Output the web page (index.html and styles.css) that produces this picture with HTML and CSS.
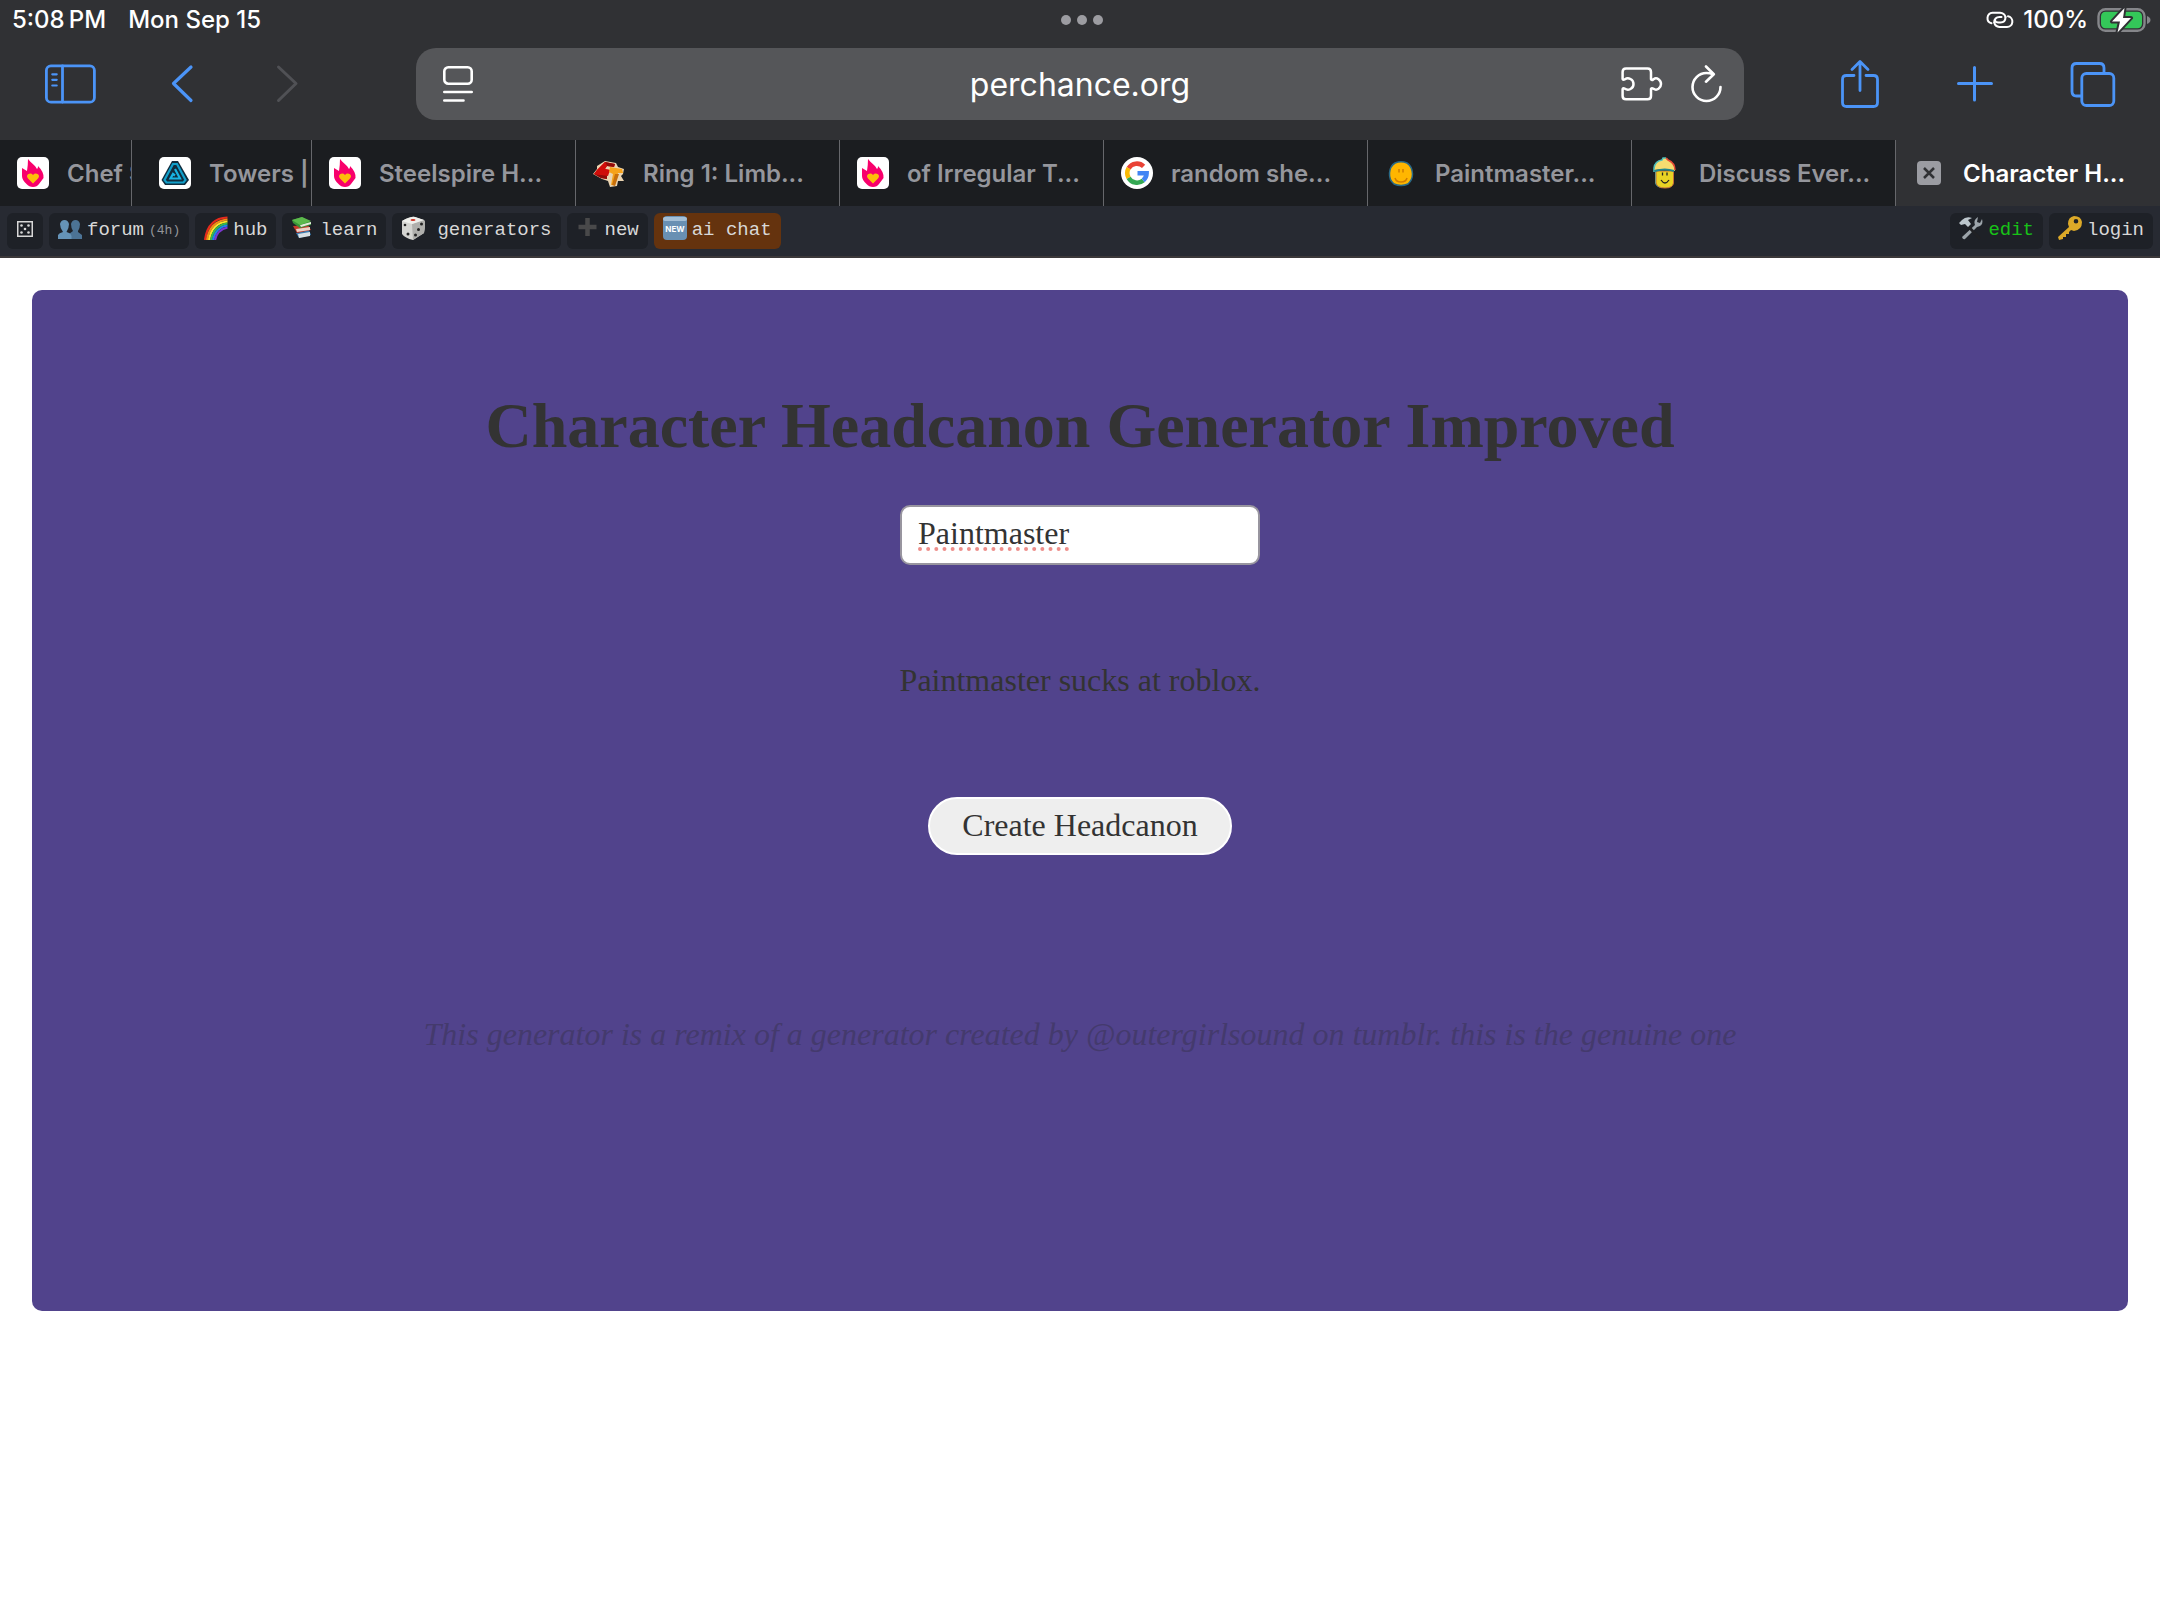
FILE: index.html
```
<!DOCTYPE html>
<html lang="en">
<head>
<meta charset="utf-8">
<meta name="viewport" content="width=device-width, initial-scale=1">
<title>Character Headcanon Generator Improved</title>
<link rel="stylesheet" href="styles.css">
</head>
<body>
<svg class="defs" aria-hidden="true">
  <symbol id="flame" viewBox="0 0 32 32">
    <rect width="32" height="32" rx="5" fill="#fff"/>
    <path d="M11 2C14 6 18 8 20 12C21 11 21 10 21 9C25 13 27 17 26.500 21L22 27Q20 30 16 30Q12 30 9.500 27Q5 23 5 19V11L10 14Q11 8 11 2Z" fill="#f8006b"/>
    <path d="M16 26.500L11 21.500Q9 19 11 17.200Q14 15.500 16 18Q18 15.500 21 17.200Q23 19 21 21.500Z" fill="#fdbd0b"/>
  </symbol>
</svg>

<header class="browser">
  <div class="status">
    <div class="status-left"><span>5:08&#8201;PM</span><span>Mon Sep 15</span></div>
    <div class="dots"><i></i><i></i><i></i></div>
    <div class="status-right">
      <svg width="28" height="18" viewBox="0 0 28 18" fill="none" stroke="#fff" stroke-width="2" stroke-linecap="round"><path d="M5.500 12.300A5.400 5.400 0 0 1 6.500 1.700H14Q18.500 2 19.500 6"/><path d="M19.500 6Q19.500 11.500 14.500 11.500H12.500Q9.500 11.500 9 9.500"/><path d="M22 5.300A5.400 5.400 0 0 1 21 16H13.500Q9 15.500 8.300 11.500"/><path d="M8.300 11.500Q8.300 6 13.500 6H15.500"/></svg>
      <span>100%</span>
      <svg width="54" height="26" viewBox="0 0 54 26"><rect x="1.500" y="2.200" width="46" height="21.600" rx="7" fill="none" stroke="#85868a" stroke-width="2.400"/><path d="M50 9Q53.500 10.500 53.500 13T50 17Z" fill="#85868a"/><rect x="4" y="4.700" width="41" height="16.600" rx="4.500" fill="#34c759"/><path d="M27.500 1L15 14.500H23L20.500 25.500L34 11H26Z" fill="#fff" stroke="#303134" stroke-width="4" stroke-linejoin="round"/><path d="M27.500 1L15 14.500H23L20.500 25.500L34 11H26Z" fill="#fff"/></svg>
    </div>
  </div>

  <div class="toolbar">
    <nav class="tools tools-left" aria-label="Navigation">
      <button class="tool" aria-label="Sidebar"><svg width="52" height="40" viewBox="0 0 52 40" fill="none" stroke="#4b94f7" stroke-width="2.800" stroke-linecap="round"><rect x="2.400" y="1.800" width="48" height="36.400" rx="4.500"/><path d="M18.500 2V38"/><path d="M8.300 10.300H12.700M8.300 15.800H12.700M8.300 21.500H12.700" stroke-width="2.200"/></svg></button>
      <button class="tool" aria-label="Back"><svg width="36" height="40" viewBox="0 0 36 40" fill="none" stroke="#4b94f7" stroke-width="3.200" stroke-linecap="round" stroke-linejoin="round"><path d="M27 3L9.500 19.500L27 36.500"/></svg></button>
      <button class="tool" aria-label="Forward" disabled><svg width="36" height="40" viewBox="0 0 36 40" fill="none" stroke="#505155" stroke-width="3" stroke-linecap="round" stroke-linejoin="round"><path d="M10.500 3L28 19.500L10.500 36.500"/></svg></button>
    </nav>
    <div class="address">
      <button class="tool" aria-label="Page settings"><svg width="32" height="38" viewBox="0 0 32 38" fill="none" stroke="#fff" stroke-width="2.600" stroke-linecap="round"><rect x="2.300" y="2.300" width="27.400" height="16.400" rx="4"/><path d="M2.300 27H29.700M2.300 35.500H21.500"/></svg></button>
      <input class="url" type="text" value="perchance.org" aria-label="Address">
      <div class="address-end">
        <button class="tool" aria-label="Extensions"><svg width="42" height="38" viewBox="0 0 42 38" fill="none" stroke="#fff" stroke-width="2.500" stroke-linejoin="round"><path d="M5 3.500H26.500Q30 3.500 30 7V14.200Q30.500 16 32.500 14.200Q35 12.500 37.500 14.200Q40 16 40 19T37.500 23.800Q35 25.500 32.500 23.800Q30.500 22.500 30 24V31Q30 34.300 26.500 34.300H5Q1.600 34.300 1.600 31V24Q2 22.500 4 23.800Q6.500 25.500 9.500 24Q12.500 22.500 12.500 19T9.500 14Q6.500 12.500 4 14.200Q2 15.500 1.600 14V7Q1.600 3.500 5 3.500Z"/></svg></button>
        <button class="tool" aria-label="Reload"><svg width="32" height="38" viewBox="0 0 32 38" fill="none" stroke="#fff" stroke-width="2.600" stroke-linecap="round" stroke-linejoin="round"><path d="M22.500 9.200Q20 8 16.500 8A14 14 0 1 0 30.500 22"/><path d="M16 1.500L23.800 9.200L16 16.700"/></svg></button>
      </div>
    </div>
    <nav class="tools tools-right" aria-label="Page actions">
      <button class="tool" aria-label="Share"><svg width="48" height="50" viewBox="0 0 48 50" fill="none" stroke="#4b94f7" stroke-width="2.800" stroke-linecap="round" stroke-linejoin="round"><path d="M18 16.500H10.500Q6.500 16.500 6.500 20.500V43.500Q6.500 47.500 10.500 47.500H37.500Q41.500 47.500 41.500 43.500V20.500Q41.500 16.500 37.500 16.500H30"/><path d="M24 31.500V3M16 10.500L24 2.500L32 10.500"/></svg></button>
      <button class="tool" aria-label="New tab"><svg width="48" height="48" viewBox="0 0 48 48" fill="none" stroke="#4b94f7" stroke-width="3" stroke-linecap="round"><path d="M22.500 7.500V40M6.500 23.500H39.500"/></svg></button>
      <button class="tool" aria-label="All tabs"><svg width="48" height="48" viewBox="0 0 48 48" fill="none" stroke="#4b94f7" stroke-width="2.800"><path d="M36 12V8Q36 3.500 31.500 3.500H8.500Q4 3.500 4 8V31.500Q4 36 8.500 36H13"/><rect x="13.800" y="13.500" width="32" height="32" rx="4.500"/></svg></button>
    </nav>
  </div>

  <nav class="tabs" aria-label="Tabs">
    <a class="tab" href="#"><svg class="favicon"><use href="#flame"/></svg><span>Chef S</span></a>
    <a class="tab tab-second" href="#"><svg class="favicon" viewBox="0 0 32 32"><rect width="32" height="32" rx="5" fill="#fff"/><path d="M13 4H19L30 23L26 28H6L2.500 23Z" fill="#102c3d"/><path d="M14 7H18L26.500 23L24.500 25.500H7.500L5.500 23Z" fill="none" stroke="#119fca" stroke-width="2.200"/><path d="M16 12L21 21.500H11.500L14 17L16 18.500" fill="none" stroke="#18b4e4" stroke-width="2.200"/></svg><span>Towers |</span></a>
    <a class="tab" href="#"><svg class="favicon"><use href="#flame"/></svg><span>Steelspire H...</span></a>
    <a class="tab" href="#"><svg class="favicon" viewBox="0 0 32 32"><path d="M4 9L12 4L23 6L25 10L31 12L30 17L28 19L31 24L25 24L24 29L17 30L15 24L9 22L0 17L4 12Z" fill="#ead4b1"/><path d="M4 13L12 5L22 7L21 10L14 9L12 12L17 13L16 16L10 15L9 17L14 18L14 22L8 21L1 17Z" fill="#d90e0a"/><path d="M12 5L22 7L21 10L14 9ZM1 17L8 21L14 22V18L8 18Z" fill="#8f0b08"/><path d="M4 13L12 5L14 9L12 12L17 13L15 19L8 18L1 17Z" fill="#cf0d0a"/><path d="M17 10L29 12L30 16L25 16L22 28L18 28L20 17L16 15Z" fill="#f6a21a"/><path d="M22 17L19 28L22 29L26 17Z" fill="#c86f0b"/></svg><span>Ring 1: Limb...</span></a>
    <a class="tab" href="#"><svg class="favicon"><use href="#flame"/></svg><span>of Irregular T...</span></a>
    <a class="tab" href="#"><svg class="favicon" viewBox="0 0 32 32"><circle cx="16" cy="16" r="16" fill="#fff"/><g fill="none" stroke-width="4.600"><path d="M22.600 9.400A9.700 9.700 0 0 0 7.600 11.200" stroke="#e94235"/><path d="M7.600 11.200A9.700 9.700 0 0 0 7.600 20.800" stroke="#fabb05"/><path d="M7.600 20.800A9.700 9.700 0 0 0 22.200 23.500" stroke="#34a853"/><path d="M22.200 23.500A9.700 9.700 0 0 0 25.600 16.300H16.500" stroke="#4285f4"/></g></svg><span>random she...</span></a>
    <a class="tab" href="#"><svg class="favicon" viewBox="0 0 32 32"><path d="M10 6Q16 3.500 22 6Q27 9 27.500 17Q27.500 23 23 27Q16 30 9 27Q4 23 4.500 16Q5 9 10 6Z" fill="#ffb600" stroke="#286987" stroke-width="1.500"/><path d="M14 12V15.500M18 12V15.500M10 21Q11 25 16 25T22 21" fill="none" stroke="#d17d00" stroke-width="1.500"/></svg><span>Paintmaster...</span></a>
    <a class="tab" href="#"><svg class="favicon" viewBox="0 0 32 32"><path d="M6 14H23V26Q23 31 15 31T6 26Z" fill="#2bbfc4"/><path d="M7 14H24.500V26Q24 31 16 31T7 26Z" fill="#e9d324" stroke="#c56c37" stroke-width="1"/><path d="M5 13Q5 4 13 3L14 1H18L19 3Q26 6 26 14L15 12Z" fill="#f5dc70"/><path d="M5 15V11Q6 4 13 3L14 1H17" fill="none" stroke="#4cbebb" stroke-width="1.500"/><path d="M17 1L19 3Q26 6 26 13" fill="none" stroke="#e84b35" stroke-width="1.500"/><path d="M6 14Q16 11 25 14" fill="none" stroke="#21878d" stroke-width="2"/><path d="M13.500 15.500V18.500M18 15.500V18.500M12 23Q16 29 20 23" fill="none" stroke="#222" stroke-width="1.300"/></svg><span>Discuss Ever...</span></a>
    <a class="tab tab-active" href="#" aria-current="page"><svg class="favicon" viewBox="0 0 32 32"><rect x="4" y="4" width="24" height="24" rx="4" fill="#9b9ca2"/><path d="M11 11L21 21M21 11L11 21" stroke="#303134" stroke-width="2.500"/></svg><span>Character H...</span></a>
  </nav>
</header>

<nav class="sitebar" aria-label="Site">
  <div class="links">
    <a class="chip" href="#" aria-label="Random"><svg width="18" height="26" viewBox="0 0 18 26"><rect x="1.750" y="5.750" width="14.500" height="14.500" fill="none" stroke="#d8d8d8" stroke-width="1.500"/><g fill="#d8d8d8"><circle cx="5.500" cy="9.500" r="1.300"/><circle cx="12.500" cy="9.500" r="1.300"/><circle cx="9" cy="13" r="1.300"/><circle cx="5.500" cy="16.500" r="1.300"/><circle cx="12.500" cy="16.500" r="1.300"/></g></svg></a>
    <a class="chip" href="#"><svg class="emoji" viewBox="0 0 24 24"><path d="M11 22V18L15 15Q13 12 13 8Q14 4 17.500 4T22 8Q22 12 20 15V16L24 19V23H11Z" fill="#4c7395"/><path d="M0 23V19Q1 17 5 16Q2 12 2 8Q3 4 6.500 4T11 8Q11 12 8.500 16Q13 17 13.500 20V23Z" fill="#6593b7"/></svg><span>forum<small>(4h)</small></span></a>
    <a class="chip" href="#"><svg class="emoji" viewBox="0 0 24 24" fill="none" stroke-width="2.200"><path d="M1 24Q4 2 23.500 1.500" stroke="#e62a1c"/><path d="M3 24Q6 5 23.500 3.500" stroke="#f58b16"/><path d="M5 24Q8 7 23.500 5.500" stroke="#fce32a"/><path d="M7 24Q10 9 23.500 7.500" stroke="#38b94d"/><path d="M9 24Q12 11 23.500 9.500" stroke="#1f84eb"/><path d="M11 24Q13 14 23.500 11.500" stroke="#7a36cf"/></svg><span>hub</span></a>
    <a class="chip" href="#"><svg class="emoji" viewBox="0 0 24 24"><path d="M5 17L18 14L20 19L8 22Z" fill="#3a7cb1"/><path d="M7 18L19 16V20L8 22Z" fill="#d8e0e4"/><path d="M2 10L17 9L20 14L6 17Z" fill="#c53a2b"/><path d="M5 13L19 11V14L6 16Z" fill="#ead2c7"/><path d="M1 4L11 1L20 6V9L9 12L2 7Z" fill="#369337"/><path d="M9 9L20 6V8L10 11Z" fill="#e4eadb"/><path d="M1 4L11 1L20 5L9 9Z" fill="#5cb94c"/></svg><span>learn</span></a>
    <a class="chip chip-wide" href="#"><svg class="emoji" viewBox="0 0 24 24"><path d="M1 5Q10 0 14 1L23 4Q25 6 23 17L12 24Q4 22 1 18Z" fill="#d4d4d1"/><path d="M11 8L23 4Q25 6 23 17L12 24Z" fill="#afafac"/><path d="M1 5Q11 0 14 1L23 4L11 8Z" fill="#efefec"/><ellipse cx="12" cy="4" rx="2.500" ry="1" fill="#ce3224"/><g fill="#242424"><circle cx="4" cy="9" r="1.300"/><circle cx="7" cy="18" r="1.500"/><circle cx="20.500" cy="8" r="1.500"/><circle cx="17.500" cy="13.500" r="1.500"/><circle cx="14.500" cy="19" r="1.500"/></g></svg><span>generators</span></a>
    <a class="chip" href="#"><svg class="emoji" viewBox="0 0 24 24"><path d="M11.500 2V20M2.500 11H20.500" stroke="#49494a" stroke-width="4.500"/></svg><span>new</span></a>
    <a class="chip chip-hot" href="#"><svg class="emoji" viewBox="0 0 24 24"><rect width="24" height="24" rx="4" fill="#6990b3"/><rect y="1" width="24" height="4" rx="2" fill="#a4bfd6"/><text x="12" y="15.500" text-anchor="middle" class="badge-text">NEW</text></svg><span>ai chat</span></a>
  </div>
  <div class="links">
    <a class="chip chip-edit" href="#"><svg class="emoji" viewBox="0 0 24 24"><path d="M3 21L16 9Q14 4 19 1L18 6L21 7L23 3Q25 10 18 11L6 23Q4 24 3 21Z" fill="#9ca4aa"/><path d="M10 9L22 22L20 24L8 11Z" fill="#202124"/><path d="M0 7L3 4Q7 0 13 2L9 4L12 8L9 11L6 8L2 9Z" fill="#bdc7cd"/></svg><span>edit</span></a>
    <a class="chip" href="#"><svg class="emoji" viewBox="0 0 24 24"><path fill-rule="evenodd" d="M10 8Q10 1 16 0Q23 0 24 6Q24 14 16 15L13 14L11 16V18H8V21H5V23L1 24L0 21L11 11ZM18 3A2.300 2.300 0 1 0 18 7.600A2.300 2.300 0 1 0 18 3Z" fill="#dca928"/></svg><span>login</span></a>
  </div>
</nav>

<main class="page">
  <section class="panel">
    <h1>Character Headcanon Generator Improved</h1>
    <input class="name" type="text" value="Paintmaster" aria-label="Character name" spellcheck="false">
    <p class="result">Paintmaster sucks at roblox.</p>
    <button class="create" type="button">Create Headcanon</button>
    <p class="credit">This generator is a remix of a generator created by @outergirlsound on tumblr. this is the genuine one</p>
  </section>
</main>
</body>
</html>
```
FILE: styles.css
```
* {
  box-sizing: border-box;
}

body {
  margin: 0;
  background: #fff;
  color: #333;
  font-family: "Liberation Serif", serif;
  font-size: 32px;
  line-height: 36px;
}

.defs {
  display: none;
}

svg {
  display: block;
  flex: none;
}

a {
  text-decoration: none;
}

/* Browser chrome */
.browser {
  background: #303134;
  color: #fff;
  font-family: Inter, sans-serif;
}

.status {
  display: grid;
  grid-template-columns: 1fr auto 1fr;
  align-items: center;
  height: 40px;
  padding: 0 9px 0 12px;
  font-size: 24px;
  font-weight: 500;
  line-height: 40px;
}

.status-left {
  display: flex;
  gap: 22px;
}

.status-right {
  display: flex;
  align-items: center;
  justify-content: flex-end;
  gap: 9px;
}

.dots {
  display: flex;
  gap: 6px;
}

.dots i {
  width: 10px;
  height: 10px;
  border-radius: 50%;
  background: #9c9ca1;
}

.toolbar {
  display: grid;
  grid-template-columns: 26fr 83fr 26fr;
  align-items: center;
  padding: 8px 0 20px;
}

.tools {
  display: flex;
  align-items: center;
  gap: 68px;
  padding: 0 44px;
}

.tools-right {
  justify-content: flex-end;
}

.tool {
  padding: 0;
  border: 0;
  background: none;
}

.address {
  display: grid;
  grid-template-columns: 1fr 2fr 1fr;
  align-items: center;
  height: 72px;
  padding: 0 22px 0 26px;
  border-radius: 20px;
  background: #555659;
}

.address .tool {
  justify-self: start;
}

.address-end {
  display: flex;
  justify-content: flex-end;
  gap: 27px;
}

.url {
  min-width: 0;
  padding: 2px 4px 0 0;
  border: 0;
  outline: 0;
  background: none;
  color: #fff;
  font: 400 32px/40px Inter, sans-serif;
  text-align: center;
}

.tabs {
  display: grid;
  grid-template-columns: 33fr 45fr repeat(7, 66fr);
  height: 66px;
  background: #1b1d20;
}

.tab {
  display: flex;
  align-items: center;
  gap: 18px;
  min-width: 0;
  padding-left: 17px;
  overflow: hidden;
  border-right: 1px solid #66676b;
  color: #95969c;
  font-size: 24px;
  font-weight: 600;
  line-height: 32px;
  white-space: nowrap;
}

.tab span {
  padding-top: 2px;
}

.tab-second {
  padding-left: 27px;
}

.tab-active {
  border-right: 0;
  background: #303134;
  color: #fff;
}

.favicon {
  width: 32px;
  height: 32px;
}

/* Site navigation */
.sitebar {
  display: flex;
  justify-content: space-between;
  padding: 7px;
  border-bottom: 2px solid #3b3839;
  background: #272a32;
  font-family: "Liberation Mono", monospace;
  font-size: 19px;
  line-height: 22px;
}

.links {
  display: flex;
  gap: 6px;
}

.chip {
  display: flex;
  gap: 5px;
  height: 36px;
  padding: 3px 9px;
  border-radius: 6px;
  background: #1e2127;
  color: #d8d8d8;
  white-space: nowrap;
}

.chip span {
  padding-top: 3px;
}

.chip small {
  margin-left: 5px;
  color: #94959a;
  font-size: 13px;
  vertical-align: 1px;
}

.chip-wide {
  gap: 12px;
}

.chip-hot {
  background: #65330e;
}

.chip-edit {
  color: #18c118;
}

.emoji {
  width: 24px;
  height: 24px;
}

.badge-text {
  fill: #fff;
  font: 700 8px Inter, sans-serif;
}

/* Generator */
.page {
  padding: 32px;
}

.panel {
  display: flex;
  flex-direction: column;
  align-items: center;
  padding: 99px 32px 259px;
  border-radius: 10px;
  background: #51438c;
  text-align: center;
}

h1 {
  margin: 0 0 42px;
  font-size: 64px;
  line-height: 74px;
}

.name {
  width: 360px;
  height: 60px;
  padding: 0 16px 4px;
  border: 2px solid #98959f;
  border-radius: 10px;
  background: #fff;
  color: #333;
  font: inherit;
  text-decoration: underline dotted #ed8f8b 4px;
  text-underline-offset: 4px;
  text-decoration-skip-ink: none;
}

.result {
  margin: 97px 0 99px;
}

.create {
  height: 58px;
  padding: 0 32px 2px;
  border: 2px solid #fff;
  border-radius: 29px;
  background: #eee;
  color: #333;
  font: inherit;
}

.credit {
  margin: 161px 0 0;
  color: #443a6d;
  font-style: italic;
}
```
